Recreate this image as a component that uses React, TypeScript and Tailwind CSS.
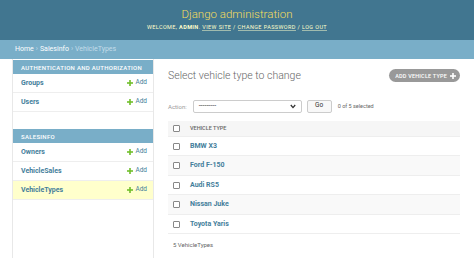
import React from "react";

const font = { fontFamily: "Roboto, 'Liberation Sans', sans-serif" };

function Plus({ className = "" }: { className?: string }) {
  return (
    <svg width="6" height="6" viewBox="0 0 6 6" className={className}>
      <rect x="2.2" y="0" width="1.6" height="6" fill="#70bf2b" />
      <rect x="0" y="2.2" width="6" height="1.6" fill="#70bf2b" />
    </svg>
  );
}

function SideRow({ name, hl = false }: { name: string; hl?: boolean }) {
  return (
    <div
      className={`flex h-[19px] items-center justify-between border-b border-[#eeeeee] pl-[8px] pr-[6px] ${
        hl ? "bg-[#ffffcc]" : "bg-white"
      }`}
    >
      <span className="text-[7px] font-bold text-[#447e9b]">{name}</span>
      <span className="flex items-center gap-[2px] text-[6.5px] text-[#447e9b]">
        <Plus />
        Add
      </span>
    </div>
  );
}

function Checkbox() {
  return <div className="h-[7px] w-[7px] rounded-[1px] border border-[#888] bg-white" />;
}

const rows = ["BMW X3", "Ford F-150", "Audi RS5", "Nissan Juke", "Toyota Yaris"];

export default function App() {
  return (
    <div style={font} className="h-[258px] w-[474px] overflow-hidden bg-white">
      <div className="flex h-[40px] flex-col items-center bg-[#417690] pt-[7px]">
        <div className="text-[11.5px] font-light leading-[14px] text-[#f5dd5d]">Django administration</div>
        <div className="mt-[1px] text-[5.5px] font-normal uppercase leading-[10px] tracking-[0.4px] text-[#ffffcc]">
          Welcome, <strong className="font-bold">admin</strong>.{" "}
          <span className="border-b border-[#ffffcc80]">View site</span> /{" "}
          <span className="border-b border-[#ffffcc80]">Change password</span> /{" "}
          <span className="border-b border-[#ffffcc80]">Log out</span>
        </div>
      </div>
      <div className="flex h-[19px] items-center bg-[#79aec8] pl-[15px] text-[7px] text-[#c4dce8]">
        <span className="text-white">Home</span>
        <span className="mx-[2px]">›</span>
        <span className="text-white">Salesinfo</span>
        <span className="mx-[2px]">›</span>
        <span>VehicleTypes</span>
      </div>
      <div className="flex">
        <div className="ml-[12px] h-[200px] w-[142px] border-x border-[#e8e8e8] pt-[1px]">
          <div className="flex h-[14px] items-center bg-[#79aec8] pl-[8px] text-[6px] font-medium uppercase tracking-[0.3px] text-white">
            Authentication and Authorization
          </div>
          <SideRow name="Groups" />
          <SideRow name="Users" />
          <div className="h-[17px]" />
          <div className="flex h-[14px] items-center bg-[#79aec8] pl-[8px] text-[6px] font-medium uppercase tracking-[0.3px] text-white">
            Salesinfo
          </div>
          <SideRow name="Owners" />
          <SideRow name="VehicleSales" />
          <SideRow name="VehicleTypes" hl />
        </div>
        <div className="flex-1 pl-[14px] pr-[14px]">
          <div className="mt-[9px] flex items-center justify-between">
            <div className="text-[10.5px] font-light text-[#666]">Select vehicle type to change</div>
            <div className="flex h-[13px] items-center gap-[3px] rounded-full bg-[#999] pl-[6px] pr-[4px] text-[5.5px] font-medium uppercase tracking-[0.2px] text-white">
              Add vehicle type
              <svg width="6" height="6" viewBox="0 0 6 6">
                <rect x="2.2" y="0" width="1.6" height="6" fill="#fff" />
                <rect x="0" y="2.2" width="6" height="1.6" fill="#fff" />
              </svg>
            </div>
          </div>
          <div className="mt-[16px] flex items-center">
            <span className="text-[6px] text-[#999]">Action:</span>
            <div className="ml-[6px] flex h-[13px] w-[109px] items-center justify-between rounded-[2px] border border-[#ccc] px-[5px]">
              <span className="text-[7px] leading-none text-[#333]">---------</span>
              <svg width="6" height="5" viewBox="0 0 6 5">
                <path d="M0.8 1 L3 3.6 L5.2 1" stroke="#333" strokeWidth="1.3" fill="none" />
              </svg>
            </div>
            <div className="ml-[5px] flex h-[13px] w-[25px] items-center justify-center rounded-[2px] border border-[#ccc] bg-[#f8f8f8] text-[6.5px] text-[#333]">
              Go
            </div>
            <span className="ml-[6px] text-[5.5px] text-[#666]">0 of 5 selected</span>
          </div>
          <div className="mt-[8px] w-[292px]">
            <div className="flex h-[16px] items-center border-b border-[#eee] bg-[#f6f6f6] pl-[5px]">
              <Checkbox />
              <span className="ml-[10px] text-[5.5px] font-medium uppercase text-[#666]">Vehicle type</span>
            </div>
            {rows.map((r, i) => (
              <div
                key={r}
                className={`flex h-[19.5px] items-center border-b border-[#eee] pl-[5px] ${
                  i % 2 === 1 ? "bg-[#f9f9f9]" : "bg-white"
                }`}
              >
                <Checkbox />
                <span className="ml-[10px] text-[7px] font-bold text-[#447e9b]">{r}</span>
              </div>
            ))}
            <div className="pl-[5px] pt-[6px] text-[6px] text-[#666]">5 VehicleTypes</div>
          </div>
        </div>
      </div>
    </div>
  );
}
